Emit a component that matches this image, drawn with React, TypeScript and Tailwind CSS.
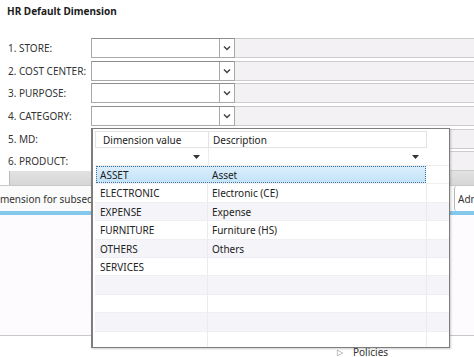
import React from "react";

const fields = ["1. STORE:", "2. COST CENTER:", "3. PURPOSE:", "4. CATEGORY:", "5. MD:", "6. PRODUCT:"];

const dimensions = [
  { value: "ASSET", description: "Asset" },
  { value: "ELECTRONIC", description: "Electronic (CE)" },
  { value: "EXPENSE", description: "Expense" },
  { value: "FURNITURE", description: "Furniture (HS)" },
  { value: "OTHERS", description: "Others" },
  { value: "SERVICES", description: "" },
  { value: "", description: "" },
  { value: "", description: "" },
  { value: "", description: "" },
  { value: "", description: "" },
];

const Chevron = () => (
  <svg width="8" height="6" viewBox="0 0 8 6">
    <polyline points="1,1.5 4,4.5 7,1.5" fill="none" stroke="#444" strokeWidth="1.5" />
  </svg>
);

const SortArrow = () => (
  <svg width="7" height="4" viewBox="0 0 7 4">
    <polygon points="0,0 7,0 3.5,4" fill="#333" />
  </svg>
);

function FieldRow({ label }: { label: string }) {
  return (
    <div className="flex h-[20px] items-center">
      <div className="w-[91px] shrink-0 pl-[8px] text-[#333]">{label}</div>
      <div className="flex h-full w-[144px] shrink-0 border border-[#a9a9a9] border-t-[#8e8e8e] bg-white">
        <div className="flex-1" />
        <div className="flex w-[15px] items-center justify-center border-l border-[#a9a9a9]">
          <Chevron />
        </div>
      </div>
      <div className="h-full flex-1 border-y border-[#cdcbce] bg-[#f4f1f4]" />
    </div>
  );
}

export default function App() {
  return (
    <div className="relative h-[357px] w-[474px] overflow-hidden bg-white font-['Noto_Sans',sans-serif] text-[10px] leading-[14px] text-[#222]">
      {/* title */}
      <div className="pl-[7px] pt-[3px] text-[10px] font-bold leading-[16px] text-[#1b1b1b]">HR Default Dimension</div>

      {/* dimension fields */}
      <div className="mt-[19px] flex flex-col gap-y-[2.7px]">
        {fields.map((f) => (
          <FieldRow key={f} label={f} />
        ))}
      </div>

      {/* tab strip */}
      <div className="flex h-[14px] bg-[#dcdcdc]">
        <div className="w-[10px] border-r border-[#b9b9b9] bg-white" />
        <div className="flex-1 bg-gradient-to-b from-[#e2e2e2] to-[#d6d6d6]" />
      </div>
      <div className="flex h-[26px] items-center border-t border-[#c9c9c9] bg-[#fbfbfb]">
        <div className="ml-[-10px] w-[464px] shrink-0 overflow-hidden whitespace-nowrap text-[#333]">Dimension for subsequent</div>
        <div className="flex h-full items-center whitespace-nowrap rounded-l-[3px] border-l border-[#b5b5b5] bg-white pl-[3px] text-[#333]">Admin</div>
      </div>
      <div className="h-[4px] bg-[#84c8ec]" />
      <div className="h-[121px] border-b border-[#c8c8c8] bg-[#fdfbfd]" />
      <div className="flex items-center pl-[337px] pt-[9px] text-[#333]">
        <span className="mr-[10px] text-[8px] text-[#888]">▷</span>
        <span>Policies</span>
      </div>

      {/* lookup popup */}
      <div className="absolute left-[91px] top-[128px] flex h-[220px] w-[359px] flex-col overflow-hidden border border-l-2 border-[#7d7d7d] bg-white pl-[2px] pt-[2px] shadow-[1px_1px_2px_rgba(0,0,0,0.2)]">
        <div className="flex h-[17px] shrink-0">
          <div className="flex w-[113px] items-center border border-r-0 border-[#e3e3e3] pl-[7px] text-[#222]">Dimension value</div>
          <div className="flex w-[219px] items-center border border-[#e3e3e3] pl-[4px] text-[#222]">Description</div>
        </div>
        <div className="flex h-[18px] shrink-0 border-b border-[#ececec]">
          <div className="flex w-[113px] items-center justify-end pr-[8px]">
            <SortArrow />
          </div>
          <div className="flex w-[219px] items-center justify-end border-l border-[#ececec] pr-[8px]">
            <SortArrow />
          </div>
        </div>
        {dimensions.map((d, i) => {
          const selected = i === 0;
          return (
            <div
              key={i}
              className={`flex h-[18.4px] shrink-0 border-b border-[#efeff3] ${i % 2 === 0 && !selected ? "bg-[#f5f5f9]" : "bg-white"}`}
            >
              {selected ? (
                <div className="ml-[1px] flex w-[330px] border border-dotted border-[#3c6f9c] bg-gradient-to-b from-[#dbeefc] to-[#c3e3f8]">
                  <div className="w-[111px] pl-[3px] leading-[16px]">{d.value}</div>
                  <div className="flex-1 pl-[4px] leading-[16px]">{d.description}</div>
                </div>
              ) : (
                <>
                  <div className="w-[113px] border-r border-[#ebebeb] pl-[5px] leading-[18px]">{d.value}</div>
                  <div className="w-[219px] border-r border-[#ebebeb] pl-[4px] leading-[18px]">{d.description}</div>
                </>
              )}
            </div>
          );
        })}
      </div>
    </div>
  );
}
